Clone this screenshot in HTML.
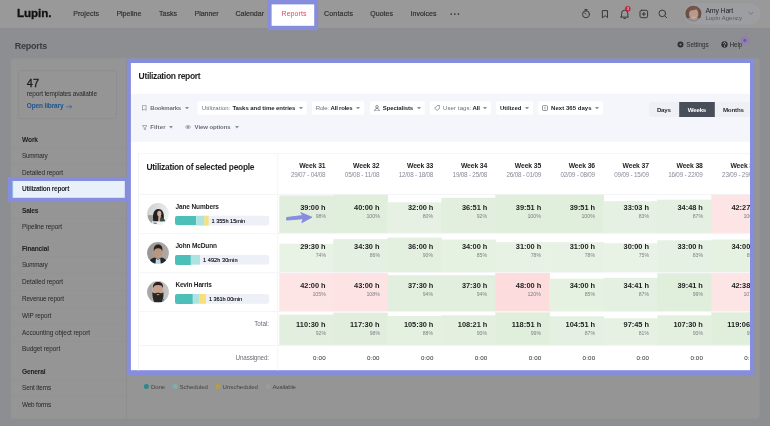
<!DOCTYPE html>
<html><head><meta charset="utf-8"><title>Utilization report</title>
<style>
html,body{margin:0;padding:0}
body{width:770px;height:426px;overflow:hidden;background:#8d8e92;font-family:"Liberation Sans",sans-serif;position:relative}
#r{position:absolute;left:0;top:0;width:770px;height:426px;overflow:hidden;will-change:transform}
#r div,#r svg,#r span{position:absolute}
#r span{white-space:nowrap;line-height:1;display:block}
</style></head>
<body><div id="r">
<svg style="left:0;top:0" width="770" height="426" viewBox="0 0 770 426"><rect x="0.00" y="0.00" width="770.00" height="28.20" fill="#999999"/><rect x="0.00" y="28.20" width="770.00" height="1.00" fill="rgb(0,0,0)" fill-opacity=".035"/><rect x="10.80" y="58.30" width="748.70" height="360.30" rx="2.00" fill="#959596"/><rect x="126.00" y="58.30" width="0.80" height="360.00" fill="#8c8c8e"/></svg>
<span style="font-size:11.6px;font-weight:700;color:#101010;top:7px;left:16.9px;letter-spacing:-0.056px;-webkit-text-stroke:.3px #101010;">Lupin.</span>
<span style="font-size:7px;font-weight:400;color:#2c2c2c;top:10px;left:73.2px;letter-spacing:0.072px;-webkit-text-stroke:.15px #2c2c2c;">Projects</span>
<span style="font-size:7px;font-weight:400;color:#2c2c2c;top:10px;left:116.4px;letter-spacing:-0.003px;-webkit-text-stroke:.15px #2c2c2c;">Pipeline</span>
<span style="font-size:7px;font-weight:400;color:#2c2c2c;top:10px;left:159px;letter-spacing:-0.002px;-webkit-text-stroke:.15px #2c2c2c;">Tasks</span>
<span style="font-size:7px;font-weight:400;color:#2c2c2c;top:10px;left:194.5px;letter-spacing:-0.023px;-webkit-text-stroke:.15px #2c2c2c;">Planner</span>
<span style="font-size:7px;font-weight:400;color:#2c2c2c;top:10px;left:235.5px;letter-spacing:0.011px;-webkit-text-stroke:.15px #2c2c2c;">Calendar</span>
<span style="font-size:7px;font-weight:400;color:#2c2c2c;top:10px;left:324px;letter-spacing:0.196px;-webkit-text-stroke:.15px #2c2c2c;">Contacts</span>
<span style="font-size:7px;font-weight:400;color:#2c2c2c;top:10px;left:370.2px;letter-spacing:0.064px;-webkit-text-stroke:.15px #2c2c2c;">Quotes</span>
<span style="font-size:7px;font-weight:400;color:#2c2c2c;top:10px;left:410.5px;letter-spacing:0.030px;-webkit-text-stroke:.15px #2c2c2c;">Invoices</span>
<svg style="left:0;top:0" width="770" height="426" viewBox="0 0 770 426"><rect x="450.40" y="13.20" width="1.70" height="1.70" rx="0.85" fill="#333"/><rect x="454.00" y="13.20" width="1.70" height="1.70" rx="0.85" fill="#333"/><rect x="457.60" y="13.20" width="1.70" height="1.70" rx="0.85" fill="#333"/><rect x="267.30" y="0.00" width="50.80" height="30.10" fill="#868ddd"/><rect x="271.60" y="4.40" width="42.60" height="21.40" fill="#ffffff"/></svg>
<span style="font-size:7px;font-weight:400;color:#e8425f;top:10px;left:281.5px;letter-spacing:0.081px;">Reports</span>
<svg style="left:575px;top:0px" width="100" height="28" viewBox="575 0 100 28" fill="none" stroke="#343434" stroke-width=".95" stroke-linecap="round" stroke-linejoin="round"><circle cx="586" cy="14.300" r="3.500"/><path d="M584.800 9.700h2.400M586 9.700v1.100M586 14.300l-1.500-1.500"/><path d="M602.700 10.600h4.800v7l-2.400-1.900-2.400 1.900z"/><path d="M621.600 16.300v-3a3.100 3.100 0 0 1 6.200 0v3l.700.800h-7.600zM623.800 18.400h1.800"/><rect x="640" y="10.300" width="7.600" height="7.400" rx="1.500"/><path d="M643.800 12.400v3.200M642.200 14h3.200"/><circle cx="662.300" cy="13.400" r="3.300"/><path d="M664.800 15.900l1.900 1.900"/></svg>
<svg style="left:0;top:0" width="770" height="426" viewBox="0 0 770 426"><rect x="625.00" y="5.90" width="5.60" height="5.60" rx="2.80" fill="#bb2a40"/></svg>
<span style="font-size:4px;font-weight:700;color:#e6c9cd;top:7px;left:626.7px;">3</span>
<svg style="left:0;top:0" width="770" height="426" viewBox="0 0 770 426"><rect x="684.00" y="3.30" width="76.40" height="21.20" rx="11.00" fill="#9d9ea2"/></svg>
<svg style="left:685px;top:5px" width="17" height="17" viewBox="0 0 17 17"><defs><clipPath id="cu"><circle cx="8.400" cy="8.700" r="8"/></clipPath><filter id="bu" x="-10%" y="-10%" width="120%" height="120%"><feGaussianBlur stdDeviation=".5"/></filter></defs><g clip-path="url(#cu)"><g filter="url(#bu)"><rect width="17" height="17" fill="#6b4f43"/><path d="M0 17c.5-3 3-4 5.500-4.500h6c2.500.500 5 1.500 5.500 4.500z" fill="#8a8a88"/><ellipse cx="8.700" cy="9" rx="4.700" ry="6" fill="#b89a8c"/><path d="M3.500 9C2.500 3.500 5.500.8 8.700.8c3.400 0 6.300 2.700 5.200 8.200-.5-3-1.800-4.600-2.700-5-1.500 1.200-4 1.600-5.700 1.400C4.500 6.200 3.900 7.400 3.500 9z" fill="#73564a"/><path d="M6.800 11.500c1.200.700 2.600.700 3.800 0-.5 1.300-3.300 1.300-3.800 0z" fill="#e6d6cf"/></g></g></svg>
<span style="font-size:7px;font-weight:400;color:#262626;top:7px;left:705.4px;letter-spacing:-0.196px;">Amy Hart</span>
<span style="font-size:6px;font-weight:400;color:#59595b;top:15px;left:705.4px;letter-spacing:0.043px;">Lupin Agency</span>
<svg style="left:748px;top:11.4px" width="6" height="5" viewBox="0 0 6 5" fill="none" stroke="#777" stroke-width=".9"><path d="M.8 1l2.2 2.4L5.2 1"/></svg>
<span style="font-size:9px;font-weight:700;color:#3a3a3c;top:42px;left:14.8px;letter-spacing:-0.253px;">Reports</span>
<svg style="left:676.8px;top:41px" width="7" height="7" viewBox="0 0 8 8"><circle cx="4" cy="4" r="3.4" fill="#2e2e2e"/><circle cx="4" cy="4" r="1.2" fill="#8d8e92"/></svg>
<span style="font-size:6.4px;font-weight:400;color:#2c2c2c;top:42px;left:686.3px;letter-spacing:-0.113px;">Settings</span>
<svg style="left:720.6px;top:41px" width="7" height="7" viewBox="0 0 8 8"><circle cx="4" cy="4" r="3.6" fill="#2e2e2e"/></svg>
<svg style="left:720.6px;top:41px" width="7" height="7" viewBox="0 0 8 8" fill="none" stroke="#c4c4c6" stroke-width=".85" stroke-linecap="round"><path d="M2.700 3a1.300 1.200 0 1 1 2 1c-.450.300-.700.500-.700.900"/><path d="M4 6.100v.050"/></svg>
<span style="font-size:6.4px;font-weight:400;color:#2c2c2c;top:42px;left:729.6px;letter-spacing:-0.185px;">Help</span>
<svg style="left:0;top:0" width="770" height="426" viewBox="0 0 770 426"><rect x="740.20" y="35.70" width="9.40" height="9.40" rx="4.70" fill="rgb(150,110,210)" fill-opacity=".35"/><rect x="743.30" y="38.80" width="3.20" height="3.20" rx="1.60" fill="#7a4fc0"/></svg>
<div style="left:18.4px;top:69.7px;width:98.4px;height:49.3px;background:transparent;border:0.8px solid rgba(0,0,0,.045);border-radius:2px;box-sizing:border-box;"></div>
<span style="font-size:11px;font-weight:400;color:#1c1c1c;top:78px;left:26.8px;letter-spacing:0.150px;-webkit-text-stroke:.3px #1c1c1c;">47</span>
<span style="font-size:6.5px;font-weight:400;color:#2a2a2a;top:91px;left:26.8px;letter-spacing:-0.169px;">report templates available</span>
<span style="font-size:6.5px;font-weight:700;color:#1f548e;top:103px;left:26.8px;letter-spacing:-0.136px;">Open library</span>
<svg style="left:66px;top:103.6px" width="6.400" height="5.500" viewBox="0 0 7 6" fill="none" stroke="#2f639b" stroke-width=".75" stroke-linecap="round" stroke-linejoin="round"><path d="M.6 3h5.600M4.400 1.200l1.800 1.800-1.800 1.800"/></svg>
<span style="font-size:6.6px;font-weight:700;color:#1c1c1c;top:137px;left:22px;letter-spacing:-0.125px;">Work</span>
<span style="font-size:6.4px;font-weight:400;color:#282828;top:153px;left:22px;letter-spacing:-0.291px;">Summary</span>
<svg style="left:0;top:0" width="770" height="426" viewBox="0 0 770 426"><rect x="11.00" y="147.20" width="115.00" height="0.70" fill="rgb(0,0,0)" fill-opacity=".022"/></svg>
<span style="font-size:6.4px;font-weight:400;color:#282828;top:170px;left:22px;letter-spacing:-0.066px;">Detailed report</span>
<svg style="left:0;top:0" width="770" height="426" viewBox="0 0 770 426"><rect x="11.00" y="164.00" width="115.00" height="0.70" fill="rgb(0,0,0)" fill-opacity=".022"/></svg>
<span style="font-size:6.6px;font-weight:700;color:#1c1c1c;top:208px;left:22px;letter-spacing:-0.234px;">Sales</span>
<span style="font-size:6.4px;font-weight:400;color:#282828;top:224px;left:22px;letter-spacing:-0.087px;">Pipeline report</span>
<svg style="left:0;top:0" width="770" height="426" viewBox="0 0 770 426"><rect x="11.00" y="218.10" width="115.00" height="0.70" fill="rgb(0,0,0)" fill-opacity=".022"/></svg>
<span style="font-size:6.6px;font-weight:700;color:#1c1c1c;top:246px;left:22px;letter-spacing:-0.199px;">Financial</span>
<span style="font-size:6.4px;font-weight:400;color:#282828;top:262px;left:22px;letter-spacing:-0.291px;">Summary</span>
<svg style="left:0;top:0" width="770" height="426" viewBox="0 0 770 426"><rect x="11.00" y="256.40" width="115.00" height="0.70" fill="rgb(0,0,0)" fill-opacity=".022"/></svg>
<span style="font-size:6.4px;font-weight:400;color:#282828;top:279px;left:22px;letter-spacing:-0.066px;">Detailed report</span>
<svg style="left:0;top:0" width="770" height="426" viewBox="0 0 770 426"><rect x="11.00" y="273.20" width="115.00" height="0.70" fill="rgb(0,0,0)" fill-opacity=".022"/></svg>
<span style="font-size:6.4px;font-weight:400;color:#282828;top:296px;left:22px;letter-spacing:-0.159px;">Revenue report</span>
<svg style="left:0;top:0" width="770" height="426" viewBox="0 0 770 426"><rect x="11.00" y="290.20" width="115.00" height="0.70" fill="rgb(0,0,0)" fill-opacity=".022"/></svg>
<span style="font-size:6.4px;font-weight:400;color:#282828;top:313px;left:22px;letter-spacing:-0.126px;">WIP report</span>
<svg style="left:0;top:0" width="770" height="426" viewBox="0 0 770 426"><rect x="11.00" y="307.00" width="115.00" height="0.70" fill="rgb(0,0,0)" fill-opacity=".022"/></svg>
<span style="font-size:6.4px;font-weight:400;color:#282828;top:330px;left:22px;letter-spacing:-0.040px;">Accounting object report</span>
<svg style="left:0;top:0" width="770" height="426" viewBox="0 0 770 426"><rect x="11.00" y="323.90" width="115.00" height="0.70" fill="rgb(0,0,0)" fill-opacity=".022"/></svg>
<span style="font-size:6.4px;font-weight:400;color:#282828;top:346px;left:22px;letter-spacing:-0.045px;">Budget report</span>
<svg style="left:0;top:0" width="770" height="426" viewBox="0 0 770 426"><rect x="11.00" y="340.70" width="115.00" height="0.70" fill="rgb(0,0,0)" fill-opacity=".022"/></svg>
<span style="font-size:6.6px;font-weight:700;color:#1c1c1c;top:369px;left:22px;letter-spacing:-0.160px;">General</span>
<span style="font-size:6.4px;font-weight:400;color:#282828;top:385px;left:22px;letter-spacing:-0.111px;">Sent items</span>
<svg style="left:0;top:0" width="770" height="426" viewBox="0 0 770 426"><rect x="11.00" y="379.20" width="115.00" height="0.70" fill="rgb(0,0,0)" fill-opacity=".022"/></svg>
<span style="font-size:6.4px;font-weight:400;color:#282828;top:402px;left:22px;letter-spacing:-0.198px;">Web forms</span>
<svg style="left:0;top:0" width="770" height="426" viewBox="0 0 770 426"><rect x="11.00" y="395.80" width="115.00" height="0.70" fill="rgb(0,0,0)" fill-opacity=".022"/><rect x="7.80" y="177.00" width="120.40" height="24.60" fill="#868ddd"/><rect x="12.20" y="181.00" width="112.60" height="16.80" fill="#e8f1fa"/><rect x="12.20" y="181.00" width="0.90" height="16.80" fill="#7db4e8"/></svg>
<span style="font-size:6.5px;font-weight:700;color:#26282c;top:186px;left:22px;letter-spacing:-0.255px;">Utilization report</span>
<svg style="left:0;top:0" width="770" height="426" viewBox="0 0 770 426"><rect x="143.90" y="384.10" width="5.00" height="5.00" rx="2.50" fill="#2c8a86"/></svg>
<span style="font-size:6.1px;font-weight:400;color:#454545;top:384px;left:151px;letter-spacing:-0.193px;">Done</span>
<svg style="left:0;top:0" width="770" height="426" viewBox="0 0 770 426"><rect x="172.50" y="384.10" width="5.00" height="5.00" rx="2.50" fill="#7bb0ae"/></svg>
<span style="font-size:6.1px;font-weight:400;color:#454545;top:384px;left:179.5px;letter-spacing:-0.039px;">Scheduled</span>
<svg style="left:0;top:0" width="770" height="426" viewBox="0 0 770 426"><rect x="215.40" y="384.10" width="5.00" height="5.00" rx="2.50" fill="#b79d45"/></svg>
<span style="font-size:6.1px;font-weight:400;color:#454545;top:384px;left:222.6px;letter-spacing:-0.018px;">Unscheduled</span>
<svg style="left:0;top:0" width="770" height="426" viewBox="0 0 770 426"><rect x="265.50" y="384.10" width="5.00" height="5.00" rx="2.50" fill="#9a9aa0"/></svg>
<span style="font-size:6.1px;font-weight:400;color:#454545;top:384px;left:272.5px;letter-spacing:-0.141px;">Available</span>
<svg style="left:0;top:0" width="770" height="426" viewBox="0 0 770 426"><rect x="126.80" y="58.60" width="627.50" height="316.90" fill="#868ddd"/><rect x="130.90" y="63.00" width="619.10" height="307.20" fill="#ffffff"/><rect x="131.10" y="93.90" width="618.90" height="47.80" fill="#f5f6fb"/></svg>
<span style="font-size:8.5px;font-weight:700;color:#1e1e1e;top:72px;left:138.6px;letter-spacing:-0.325px;">Utilization report</span>
<svg style="left:142px;top:105.00px" width="5" height="6.600" viewBox="0 0 5 6.6" fill="none" stroke="#7d8391" stroke-width=".65" stroke-linejoin="round"><path d="M.5.400h3.600v5L2.300 4.100.5 5.400z"/></svg>
<span style="font-size:6px;font-weight:700;color:#6a6f7c;top:105px;left:150.3px;letter-spacing:-0.236px;">Bookmarks</span>
<svg style="left:185.2px;top:106.7px" width="4" height="2.6" viewBox="0 0 4 2.6"><path d="M0 0h4L2 2.6z" fill="#8d919c"/></svg>
<svg style="left:0;top:0" width="770" height="426" viewBox="0 0 770 426"><rect x="197.60" y="101.30" width="108.90" height="13.40" rx="2.00" fill="#ffffff"/></svg>
<span style="font-size:6px;font-weight:400;color:#6a6f7c;top:105px;left:201.8px;letter-spacing:0.083px;">Utilization:</span>
<span style="font-size:6px;font-weight:700;color:#1d1f24;top:105px;left:232.4px;letter-spacing:-0.060px;">Tasks and time entries</span>
<svg style="left:298.6px;top:106.7px" width="4" height="2.6" viewBox="0 0 4 2.6"><path d="M0 0h4L2 2.6z" fill="#8d919c"/></svg>
<svg style="left:0;top:0" width="770" height="426" viewBox="0 0 770 426"><rect x="312.00" y="101.30" width="52.30" height="13.40" rx="2.00" fill="#ffffff"/></svg>
<span style="font-size:6px;font-weight:400;color:#6a6f7c;top:105px;left:315.8px;letter-spacing:-0.204px;">Role:</span>
<span style="font-size:6px;font-weight:700;color:#1d1f24;top:105px;left:330.6px;letter-spacing:-0.211px;">All roles</span>
<svg style="left:356.4px;top:106.7px" width="4" height="2.6" viewBox="0 0 4 2.6"><path d="M0 0h4L2 2.6z" fill="#8d919c"/></svg>
<svg style="left:0;top:0" width="770" height="426" viewBox="0 0 770 426"><rect x="369.80" y="101.30" width="54.90" height="13.40" rx="2.00" fill="#ffffff"/></svg>
<svg style="left:374px;top:104.7px" width="6" height="6.4" viewBox="0 0 6 6.4" fill="none" stroke="#4a4e58" stroke-width=".6"><circle cx="3" cy="1.8" r="1.3"/><path d="M.6 6c0-1.6 1-2.5 2.4-2.5S5.400 4.400 5.400 6z" stroke-linejoin="round"/></svg>
<span style="font-size:6px;font-weight:700;color:#1d1f24;top:105px;left:382.8px;letter-spacing:-0.096px;">Specialists</span>
<svg style="left:416.6px;top:106.7px" width="4" height="2.6" viewBox="0 0 4 2.6"><path d="M0 0h4L2 2.6z" fill="#8d919c"/></svg>
<svg style="left:0;top:0" width="770" height="426" viewBox="0 0 770 426"><rect x="429.80" y="101.30" width="61.20" height="13.40" rx="2.00" fill="#ffffff"/></svg>
<svg style="left:433.6px;top:104.9px" width="6.400" height="6" viewBox="0 0 6.4 6" fill="none" stroke="#6a6f7c" stroke-width=".7" stroke-linejoin="round"><path d="M.6 3.200L3.200.600h2.600v2.600L3.200 5.400z"/></svg>
<span style="font-size:6px;font-weight:400;color:#6a6f7c;top:105px;left:443px;letter-spacing:0.106px;">User tags:</span>
<span style="font-size:6px;font-weight:700;color:#1d1f24;top:105px;left:472.6px;letter-spacing:-0.186px;">All</span>
<svg style="left:483px;top:106.7px" width="4" height="2.6" viewBox="0 0 4 2.6"><path d="M0 0h4L2 2.6z" fill="#8d919c"/></svg>
<svg style="left:0;top:0" width="770" height="426" viewBox="0 0 770 426"><rect x="496.20" y="101.30" width="36.80" height="13.40" rx="2.00" fill="#ffffff"/></svg>
<span style="font-size:6px;font-weight:700;color:#1d1f24;top:105px;left:500px;letter-spacing:0.008px;">Utilized</span>
<svg style="left:525px;top:106.7px" width="4" height="2.6" viewBox="0 0 4 2.6"><path d="M0 0h4L2 2.6z" fill="#8d919c"/></svg>
<svg style="left:0;top:0" width="770" height="426" viewBox="0 0 770 426"><rect x="537.70" y="101.30" width="65.20" height="13.40" rx="2.00" fill="#ffffff"/></svg>
<svg style="left:541.6px;top:104.9px" width="6" height="6" viewBox="0 0 6 6" fill="none" stroke="#555a67" stroke-width=".65"><rect x=".5" y=".7" width="5" height="4.800" rx=".8"/><path d="M3 2.200v2.200"/></svg>
<span style="font-size:6px;font-weight:700;color:#1d1f24;top:105px;left:551px;letter-spacing:0.047px;">Next 365 days</span>
<svg style="left:595px;top:106.7px" width="4" height="2.6" viewBox="0 0 4 2.6"><path d="M0 0h4L2 2.6z" fill="#8d919c"/></svg>
<svg style="left:141.6px;top:124.50px" width="5.600" height="5.600" viewBox="0 0 6 6" fill="none" stroke="#7d8391" stroke-width=".7" stroke-linejoin="round"><path d="M.5.600h5L3.600 3v2.400L2.400 4.600V3z"/></svg>
<span style="font-size:6px;font-weight:700;color:#6a6f7c;top:124px;left:150.3px;letter-spacing:0.106px;">Filter</span>
<svg style="left:168.6px;top:126.0px" width="4" height="2.6" viewBox="0 0 4 2.6"><path d="M0 0h4L2 2.6z" fill="#8d919c"/></svg>
<svg style="left:185.400px;top:125.30px" width="6" height="4" viewBox="0 0 6.6 4.4" fill="none" stroke="#7d8391" stroke-width=".7"><path d="M.4 2.200C1.400.800 2.300.400 3.300.400s1.900.4 2.900 1.800C5.200 3.600 4.300 4 3.300 4S1.400 3.600.4 2.200z"/><circle cx="3.300" cy="2.200" r=".8" fill="#6a6f7c"/></svg>
<span style="font-size:6px;font-weight:700;color:#6a6f7c;top:124px;left:194.6px;letter-spacing:-0.082px;">View options</span>
<svg style="left:235px;top:126.0px" width="4" height="2.6" viewBox="0 0 4 2.6"><path d="M0 0h4L2 2.6z" fill="#8d919c"/></svg>
<div style="left:648.7px;top:102px;width:101px;height:15px;background:#eff0f5;border-radius:2px 0 0 2px;"></div>
<svg style="left:0;top:0" width="770" height="426" viewBox="0 0 770 426"><rect x="679.20" y="102.00" width="35.60" height="15.00" fill="#484d5a"/></svg>
<span style="font-size:6.2px;font-weight:700;color:#2a2d35;top:107px;left:656.9px;letter-spacing:-0.266px;">Days</span>
<span style="font-size:6.2px;font-weight:700;color:#ffffff;top:107px;left:687.8px;letter-spacing:-0.250px;">Weeks</span>
<span style="font-size:6.2px;font-weight:700;color:#2a2d35;top:107px;left:722.9px;letter-spacing:-0.180px;">Months</span>
<svg style="left:0;top:0" width="770" height="426" viewBox="0 0 770 426"><rect x="138.10" y="153.30" width="611.90" height="0.80" fill="#f1f2f6"/><rect x="138.10" y="153.30" width="0.80" height="217.10" fill="#f1f2f6"/><rect x="277.40" y="153.30" width="0.80" height="217.10" fill="#f1f2f6"/><rect x="138.10" y="194.20" width="611.90" height="0.80" fill="#f1f2f6"/><rect x="138.10" y="233.30" width="611.90" height="0.80" fill="#f1f2f6"/><rect x="138.10" y="272.40" width="611.90" height="0.80" fill="#f1f2f6"/><rect x="138.10" y="311.30" width="611.90" height="0.80" fill="#f1f2f6"/><rect x="138.10" y="345.00" width="611.90" height="0.80" fill="#f1f2f6"/></svg>
<span style="font-size:8.4px;font-weight:700;color:#1e1e1e;top:163px;left:146.5px;letter-spacing:-0.255px;">Utilization of selected people</span>
<svg style="left:131px;top:63px" width="619" height="307" viewBox="131 63 619 307"><defs><linearGradient id="rg" x1="0" y1="0" x2="0" y2="1"><stop offset="0" stop-color="#fcdcdd"/><stop offset="1" stop-color="#fde9e9"/></linearGradient></defs><rect x="279.30" y="195.46" width="54.60" height="37.44" fill="#e1eedd"/><rect x="333.30" y="194.70" width="54.60" height="38.20" fill="#e0eedc"/><rect x="387.30" y="202.34" width="54.60" height="30.56" fill="#e6f1e3"/><rect x="441.30" y="197.76" width="54.60" height="35.14" fill="#e2efdf"/><rect x="495.30" y="194.70" width="54.60" height="38.20" fill="#e0eedc"/><rect x="549.30" y="194.70" width="54.60" height="38.20" fill="#e0eedc"/><rect x="603.30" y="201.19" width="54.60" height="31.71" fill="#e5f1e2"/><rect x="657.30" y="199.67" width="54.60" height="33.23" fill="#e4f0e1"/><rect x="711.30" y="194.70" width="54.00" height="38.20" fill="#fde4e5"/><rect x="279.30" y="243.73" width="54.60" height="28.27" fill="#e8f2e5"/><rect x="333.30" y="239.15" width="54.60" height="32.85" fill="#e4f0e1"/><rect x="387.30" y="237.62" width="54.60" height="34.38" fill="#e3f0e0"/><rect x="441.30" y="239.53" width="54.60" height="32.47" fill="#e5f1e1"/><rect x="495.30" y="242.20" width="54.60" height="29.80" fill="#e7f2e4"/><rect x="549.30" y="242.20" width="54.60" height="29.80" fill="#e7f2e4"/><rect x="603.30" y="243.35" width="54.60" height="28.65" fill="#e8f2e5"/><rect x="657.30" y="240.29" width="54.60" height="31.71" fill="#e5f1e2"/><rect x="711.30" y="239.53" width="54.00" height="32.47" fill="#e5f1e1"/><rect x="279.30" y="272.90" width="54.60" height="38.20" fill="#fde5e6"/><rect x="333.30" y="272.90" width="54.60" height="38.20" fill="#fde3e4"/><rect x="387.30" y="275.19" width="54.60" height="35.91" fill="#e2efde"/><rect x="441.30" y="275.19" width="54.60" height="35.91" fill="#e2efde"/><rect x="495.30" y="272.90" width="54.60" height="38.20" fill="#fddcdd"/><rect x="549.30" y="278.63" width="54.60" height="32.47" fill="#e5f1e1"/><rect x="603.30" y="277.87" width="54.60" height="33.23" fill="#e4f0e1"/><rect x="657.30" y="273.28" width="54.60" height="37.82" fill="#e0eedc"/><rect x="711.30" y="272.90" width="54.00" height="38.20" fill="#fde4e5"/><rect x="279.30" y="314.63" width="54.60" height="30.27" fill="#e2efdf"/><rect x="333.30" y="312.66" width="54.60" height="32.24" fill="#e1eedd"/><rect x="387.30" y="315.95" width="54.60" height="28.95" fill="#e4f0e0"/><rect x="441.30" y="315.29" width="54.60" height="29.61" fill="#e3f0e0"/><rect x="495.30" y="312.33" width="54.60" height="32.57" fill="#e0eedc"/><rect x="549.30" y="316.28" width="54.60" height="28.62" fill="#e4f0e1"/><rect x="603.30" y="318.25" width="54.60" height="26.65" fill="#e6f1e3"/><rect x="657.30" y="315.29" width="54.60" height="29.61" fill="#e3f0e0"/><rect x="711.30" y="312.33" width="54.00" height="32.57" fill="#e0eedc"/></svg>
<div style="left:131px;top:63px;width:619px;height:307.4px;overflow:hidden;background:none;">
<span style="font-size:6.8px;font-weight:700;color:#1e1e1e;top:100px;left:194.48px;transform:translateX(-100%);letter-spacing:-0.116px;">Week 31</span>
<span style="font-size:6.3px;font-weight:400;color:#878c9b;top:109px;left:194.40px;transform:translateX(-100%);letter-spacing:-0.202px;">29/07 - 04/08</span>
<span style="font-size:6.8px;font-weight:700;color:#1e1e1e;top:100px;left:248.38px;transform:translateX(-100%);letter-spacing:-0.116px;">Week 32</span>
<span style="font-size:6.3px;font-weight:400;color:#878c9b;top:109px;left:248.34px;transform:translateX(-100%);letter-spacing:-0.163px;">05/08 - 11/08</span>
<span style="font-size:6.8px;font-weight:700;color:#1e1e1e;top:100px;left:302.28px;transform:translateX(-100%);letter-spacing:-0.116px;">Week 33</span>
<span style="font-size:6.3px;font-weight:400;color:#878c9b;top:109px;left:302.20px;transform:translateX(-100%);letter-spacing:-0.202px;">12/08 - 18/08</span>
<span style="font-size:6.8px;font-weight:700;color:#1e1e1e;top:100px;left:356.18px;transform:translateX(-100%);letter-spacing:-0.116px;">Week 34</span>
<span style="font-size:6.3px;font-weight:400;color:#878c9b;top:109px;left:356.10px;transform:translateX(-100%);letter-spacing:-0.202px;">19/08 - 25/08</span>
<span style="font-size:6.8px;font-weight:700;color:#1e1e1e;top:100px;left:410.08px;transform:translateX(-100%);letter-spacing:-0.116px;">Week 35</span>
<span style="font-size:6.3px;font-weight:400;color:#878c9b;top:109px;left:410.00px;transform:translateX(-100%);letter-spacing:-0.202px;">26/08 - 01/09</span>
<span style="font-size:6.8px;font-weight:700;color:#1e1e1e;top:100px;left:463.98px;transform:translateX(-100%);letter-spacing:-0.116px;">Week 36</span>
<span style="font-size:6.3px;font-weight:400;color:#878c9b;top:109px;left:463.90px;transform:translateX(-100%);letter-spacing:-0.202px;">02/09 - 08/09</span>
<span style="font-size:6.8px;font-weight:700;color:#1e1e1e;top:100px;left:517.88px;transform:translateX(-100%);letter-spacing:-0.116px;">Week 37</span>
<span style="font-size:6.3px;font-weight:400;color:#878c9b;top:109px;left:517.80px;transform:translateX(-100%);letter-spacing:-0.202px;">09/09 - 15/09</span>
<span style="font-size:6.8px;font-weight:700;color:#1e1e1e;top:100px;left:571.78px;transform:translateX(-100%);letter-spacing:-0.116px;">Week 38</span>
<span style="font-size:6.3px;font-weight:400;color:#878c9b;top:109px;left:571.70px;transform:translateX(-100%);letter-spacing:-0.202px;">16/09 - 22/09</span>
<span style="font-size:6.8px;font-weight:700;color:#1e1e1e;top:100px;left:625.68px;transform:translateX(-100%);letter-spacing:-0.116px;">Week 39</span>
<span style="font-size:6.3px;font-weight:400;color:#878c9b;top:109px;left:625.60px;transform:translateX(-100%);letter-spacing:-0.202px;">23/09 - 29/09</span>
<span style="font-size:7.4px;font-weight:700;color:#1e1e1e;top:141px;left:194.59px;transform:translateX(-100%);letter-spacing:-0.014px;">39:00 h</span>
<span style="font-size:6.2px;font-weight:400;color:#7d8087;top:150px;left:194.59999999999997px;transform-origin:100% 50%;transform:translateX(-100%) scaleX(0.8313);">98%</span>
<span style="font-size:7.4px;font-weight:700;color:#1e1e1e;top:141px;left:248.49px;transform:translateX(-100%);letter-spacing:-0.014px;">40:00 h</span>
<span style="font-size:6.2px;font-weight:400;color:#7d8087;top:150px;left:248.5px;transform-origin:100% 50%;transform:translateX(-100%) scaleX(0.8592);">100%</span>
<span style="font-size:7.4px;font-weight:700;color:#1e1e1e;top:141px;left:302.39px;transform:translateX(-100%);letter-spacing:-0.014px;">32:00 h</span>
<span style="font-size:6.2px;font-weight:400;color:#7d8087;top:150px;left:302.4px;transform-origin:100% 50%;transform:translateX(-100%) scaleX(0.8313);">80%</span>
<span style="font-size:7.4px;font-weight:700;color:#1e1e1e;top:141px;left:356.29px;transform:translateX(-100%);letter-spacing:-0.014px;">36:51 h</span>
<span style="font-size:6.2px;font-weight:400;color:#7d8087;top:150px;left:356.29999999999995px;transform-origin:100% 50%;transform:translateX(-100%) scaleX(0.8313);">92%</span>
<span style="font-size:7.4px;font-weight:700;color:#1e1e1e;top:141px;left:410.19px;transform:translateX(-100%);letter-spacing:-0.014px;">39:51 h</span>
<span style="font-size:6.2px;font-weight:400;color:#7d8087;top:150px;left:410.19999999999993px;transform-origin:100% 50%;transform:translateX(-100%) scaleX(0.8592);">100%</span>
<span style="font-size:7.4px;font-weight:700;color:#1e1e1e;top:141px;left:464.09px;transform:translateX(-100%);letter-spacing:-0.014px;">39:51 h</span>
<span style="font-size:6.2px;font-weight:400;color:#7d8087;top:150px;left:464.1px;transform-origin:100% 50%;transform:translateX(-100%) scaleX(0.8592);">100%</span>
<span style="font-size:7.4px;font-weight:700;color:#1e1e1e;top:141px;left:517.99px;transform:translateX(-100%);letter-spacing:-0.014px;">33:03 h</span>
<span style="font-size:6.2px;font-weight:400;color:#7d8087;top:150px;left:518.0px;transform-origin:100% 50%;transform:translateX(-100%) scaleX(0.8313);">83%</span>
<span style="font-size:7.4px;font-weight:700;color:#1e1e1e;top:141px;left:571.89px;transform:translateX(-100%);letter-spacing:-0.014px;">34:48 h</span>
<span style="font-size:6.2px;font-weight:400;color:#7d8087;top:150px;left:571.9px;transform-origin:100% 50%;transform:translateX(-100%) scaleX(0.8313);">87%</span>
<span style="font-size:7.4px;font-weight:700;color:#1e1e1e;top:141px;left:625.79px;transform:translateX(-100%);letter-spacing:-0.014px;">42:27 h</span>
<span style="font-size:6.2px;font-weight:400;color:#7d8087;top:150px;left:625.8px;transform-origin:100% 50%;transform:translateX(-100%) scaleX(0.8592);">106%</span>
<span style="font-size:7.4px;font-weight:700;color:#1e1e1e;top:180px;left:194.59px;transform:translateX(-100%);letter-spacing:-0.014px;">29:30 h</span>
<span style="font-size:6.2px;font-weight:400;color:#7d8087;top:189px;left:194.59999999999997px;transform-origin:100% 50%;transform:translateX(-100%) scaleX(0.8313);">74%</span>
<span style="font-size:7.4px;font-weight:700;color:#1e1e1e;top:180px;left:248.49px;transform:translateX(-100%);letter-spacing:-0.014px;">34:30 h</span>
<span style="font-size:6.2px;font-weight:400;color:#7d8087;top:189px;left:248.5px;transform-origin:100% 50%;transform:translateX(-100%) scaleX(0.8313);">86%</span>
<span style="font-size:7.4px;font-weight:700;color:#1e1e1e;top:180px;left:302.39px;transform:translateX(-100%);letter-spacing:-0.014px;">36:00 h</span>
<span style="font-size:6.2px;font-weight:400;color:#7d8087;top:189px;left:302.4px;transform-origin:100% 50%;transform:translateX(-100%) scaleX(0.8313);">90%</span>
<span style="font-size:7.4px;font-weight:700;color:#1e1e1e;top:180px;left:356.29px;transform:translateX(-100%);letter-spacing:-0.014px;">34:00 h</span>
<span style="font-size:6.2px;font-weight:400;color:#7d8087;top:189px;left:356.29999999999995px;transform-origin:100% 50%;transform:translateX(-100%) scaleX(0.8313);">85%</span>
<span style="font-size:7.4px;font-weight:700;color:#1e1e1e;top:180px;left:410.19px;transform:translateX(-100%);letter-spacing:-0.014px;">31:00 h</span>
<span style="font-size:6.2px;font-weight:400;color:#7d8087;top:189px;left:410.19999999999993px;transform-origin:100% 50%;transform:translateX(-100%) scaleX(0.8313);">78%</span>
<span style="font-size:7.4px;font-weight:700;color:#1e1e1e;top:180px;left:464.09px;transform:translateX(-100%);letter-spacing:-0.014px;">31:00 h</span>
<span style="font-size:6.2px;font-weight:400;color:#7d8087;top:189px;left:464.1px;transform-origin:100% 50%;transform:translateX(-100%) scaleX(0.8313);">78%</span>
<span style="font-size:7.4px;font-weight:700;color:#1e1e1e;top:180px;left:517.99px;transform:translateX(-100%);letter-spacing:-0.014px;">30:00 h</span>
<span style="font-size:6.2px;font-weight:400;color:#7d8087;top:189px;left:518.0px;transform-origin:100% 50%;transform:translateX(-100%) scaleX(0.8313);">75%</span>
<span style="font-size:7.4px;font-weight:700;color:#1e1e1e;top:180px;left:571.89px;transform:translateX(-100%);letter-spacing:-0.014px;">33:00 h</span>
<span style="font-size:6.2px;font-weight:400;color:#7d8087;top:189px;left:571.9px;transform-origin:100% 50%;transform:translateX(-100%) scaleX(0.8313);">83%</span>
<span style="font-size:7.4px;font-weight:700;color:#1e1e1e;top:180px;left:625.79px;transform:translateX(-100%);letter-spacing:-0.014px;">34:00 h</span>
<span style="font-size:6.2px;font-weight:400;color:#7d8087;top:189px;left:625.8px;transform-origin:100% 50%;transform:translateX(-100%) scaleX(0.8313);">85%</span>
<span style="font-size:7.4px;font-weight:700;color:#1e1e1e;top:219px;left:194.59px;transform:translateX(-100%);letter-spacing:-0.014px;">42:00 h</span>
<span style="font-size:6.2px;font-weight:400;color:#7d8087;top:228px;left:194.59999999999997px;transform-origin:100% 50%;transform:translateX(-100%) scaleX(0.8592);">105%</span>
<span style="font-size:7.4px;font-weight:700;color:#1e1e1e;top:219px;left:248.49px;transform:translateX(-100%);letter-spacing:-0.014px;">43:00 h</span>
<span style="font-size:6.2px;font-weight:400;color:#7d8087;top:228px;left:248.5px;transform-origin:100% 50%;transform:translateX(-100%) scaleX(0.8592);">108%</span>
<span style="font-size:7.4px;font-weight:700;color:#1e1e1e;top:219px;left:302.39px;transform:translateX(-100%);letter-spacing:-0.014px;">37:30 h</span>
<span style="font-size:6.2px;font-weight:400;color:#7d8087;top:228px;left:302.4px;transform-origin:100% 50%;transform:translateX(-100%) scaleX(0.8313);">94%</span>
<span style="font-size:7.4px;font-weight:700;color:#1e1e1e;top:219px;left:356.29px;transform:translateX(-100%);letter-spacing:-0.014px;">37:30 h</span>
<span style="font-size:6.2px;font-weight:400;color:#7d8087;top:228px;left:356.29999999999995px;transform-origin:100% 50%;transform:translateX(-100%) scaleX(0.8313);">94%</span>
<span style="font-size:7.4px;font-weight:700;color:#1e1e1e;top:219px;left:410.19px;transform:translateX(-100%);letter-spacing:-0.014px;">48:00 h</span>
<span style="font-size:6.2px;font-weight:400;color:#7d8087;top:228px;left:410.19999999999993px;transform-origin:100% 50%;transform:translateX(-100%) scaleX(0.8592);">120%</span>
<span style="font-size:7.4px;font-weight:700;color:#1e1e1e;top:219px;left:464.09px;transform:translateX(-100%);letter-spacing:-0.014px;">34:00 h</span>
<span style="font-size:6.2px;font-weight:400;color:#7d8087;top:228px;left:464.1px;transform-origin:100% 50%;transform:translateX(-100%) scaleX(0.8313);">85%</span>
<span style="font-size:7.4px;font-weight:700;color:#1e1e1e;top:219px;left:517.99px;transform:translateX(-100%);letter-spacing:-0.014px;">34:41 h</span>
<span style="font-size:6.2px;font-weight:400;color:#7d8087;top:228px;left:518.0px;transform-origin:100% 50%;transform:translateX(-100%) scaleX(0.8313);">87%</span>
<span style="font-size:7.4px;font-weight:700;color:#1e1e1e;top:219px;left:571.89px;transform:translateX(-100%);letter-spacing:-0.014px;">39:41 h</span>
<span style="font-size:6.2px;font-weight:400;color:#7d8087;top:228px;left:571.9px;transform-origin:100% 50%;transform:translateX(-100%) scaleX(0.8313);">99%</span>
<span style="font-size:7.4px;font-weight:700;color:#1e1e1e;top:219px;left:625.79px;transform:translateX(-100%);letter-spacing:-0.014px;">42:38 h</span>
<span style="font-size:6.2px;font-weight:400;color:#7d8087;top:228px;left:625.8px;transform-origin:100% 50%;transform:translateX(-100%) scaleX(0.8592);">107%</span>
<span style="font-size:7.4px;font-weight:700;color:#1e1e1e;top:258px;left:194.64px;transform:translateX(-100%);letter-spacing:0.045px;">110:30 h</span>
<span style="font-size:6.2px;font-weight:400;color:#7d8087;top:267px;left:194.59999999999997px;transform-origin:100% 50%;transform:translateX(-100%) scaleX(0.8313);">92%</span>
<span style="font-size:7.4px;font-weight:700;color:#1e1e1e;top:258px;left:248.54px;transform:translateX(-100%);letter-spacing:0.045px;">117:30 h</span>
<span style="font-size:6.2px;font-weight:400;color:#7d8087;top:267px;left:248.5px;transform-origin:100% 50%;transform:translateX(-100%) scaleX(0.8313);">98%</span>
<span style="font-size:7.4px;font-weight:700;color:#1e1e1e;top:258px;left:302.39px;transform:translateX(-100%);letter-spacing:-0.013px;">105:30 h</span>
<span style="font-size:6.2px;font-weight:400;color:#7d8087;top:267px;left:302.4px;transform-origin:100% 50%;transform:translateX(-100%) scaleX(0.8313);">88%</span>
<span style="font-size:7.4px;font-weight:700;color:#1e1e1e;top:258px;left:356.29px;transform:translateX(-100%);letter-spacing:-0.013px;">108:21 h</span>
<span style="font-size:6.2px;font-weight:400;color:#7d8087;top:267px;left:356.29999999999995px;transform-origin:100% 50%;transform:translateX(-100%) scaleX(0.8313);">90%</span>
<span style="font-size:7.4px;font-weight:700;color:#1e1e1e;top:258px;left:410.24px;transform:translateX(-100%);letter-spacing:0.045px;">118:51 h</span>
<span style="font-size:6.2px;font-weight:400;color:#7d8087;top:267px;left:410.19999999999993px;transform-origin:100% 50%;transform:translateX(-100%) scaleX(0.8313);">99%</span>
<span style="font-size:7.4px;font-weight:700;color:#1e1e1e;top:258px;left:464.09px;transform:translateX(-100%);letter-spacing:-0.013px;">104:51 h</span>
<span style="font-size:6.2px;font-weight:400;color:#7d8087;top:267px;left:464.1px;transform-origin:100% 50%;transform:translateX(-100%) scaleX(0.8313);">87%</span>
<span style="font-size:7.4px;font-weight:700;color:#1e1e1e;top:258px;left:517.99px;transform:translateX(-100%);letter-spacing:-0.014px;">97:45 h</span>
<span style="font-size:6.2px;font-weight:400;color:#7d8087;top:267px;left:518.0px;transform-origin:100% 50%;transform:translateX(-100%) scaleX(0.8313);">81%</span>
<span style="font-size:7.4px;font-weight:700;color:#1e1e1e;top:258px;left:571.89px;transform:translateX(-100%);letter-spacing:-0.013px;">107:30 h</span>
<span style="font-size:6.2px;font-weight:400;color:#7d8087;top:267px;left:571.9px;transform-origin:100% 50%;transform:translateX(-100%) scaleX(0.8313);">90%</span>
<span style="font-size:7.4px;font-weight:700;color:#1e1e1e;top:258px;left:625.84px;transform:translateX(-100%);letter-spacing:0.045px;">119:06 h</span>
<span style="font-size:6.2px;font-weight:400;color:#7d8087;top:267px;left:625.8px;transform-origin:100% 50%;transform:translateX(-100%) scaleX(0.8313);">99%</span>
<span style="font-size:6.2px;font-weight:400;color:#2a2a2a;top:292px;left:194.75px;transform:translateX(-100%);letter-spacing:0.151px;">0:00</span>
<span style="font-size:6.2px;font-weight:400;color:#2a2a2a;top:292px;left:248.65px;transform:translateX(-100%);letter-spacing:0.151px;">0:00</span>
<span style="font-size:6.2px;font-weight:400;color:#2a2a2a;top:292px;left:302.55px;transform:translateX(-100%);letter-spacing:0.151px;">0:00</span>
<span style="font-size:6.2px;font-weight:400;color:#2a2a2a;top:292px;left:356.45px;transform:translateX(-100%);letter-spacing:0.151px;">0:00</span>
<span style="font-size:6.2px;font-weight:400;color:#2a2a2a;top:292px;left:410.35px;transform:translateX(-100%);letter-spacing:0.151px;">0:00</span>
<span style="font-size:6.2px;font-weight:400;color:#2a2a2a;top:292px;left:464.25px;transform:translateX(-100%);letter-spacing:0.151px;">0:00</span>
<span style="font-size:6.2px;font-weight:400;color:#2a2a2a;top:292px;left:518.15px;transform:translateX(-100%);letter-spacing:0.151px;">0:00</span>
<span style="font-size:6.2px;font-weight:400;color:#2a2a2a;top:292px;left:572.05px;transform:translateX(-100%);letter-spacing:0.151px;">0:00</span>
<span style="font-size:6.2px;font-weight:400;color:#2a2a2a;top:292px;left:625.95px;transform:translateX(-100%);letter-spacing:0.151px;">0:00</span>
</div>
<svg style="left:147px;top:203.20px" width="22" height="22" viewBox="0 0 22 22"><defs><linearGradient id="ag0" x1="0" y1="0" x2="1" y2=".3"><stop offset="0" stop-color="#cdcdcd"/><stop offset="1" stop-color="#eeeeee"/></linearGradient><clipPath id="c0"><circle cx="11" cy="11" r="10.900"/></clipPath><filter id="ab0" x="-10%" y="-10%" width="120%" height="120%"><feGaussianBlur stdDeviation=".45"/></filter></defs><g clip-path="url(#c0)"><g filter="url(#ab0)"><rect width="22" height="22" fill="url(#ag0)"/><path d="M.6 12.3l5.200-.4.800 7.600-4.400 1.200z" fill="#9e9e9e"/><path d="M6.200 17.500c-.9-6.200.6-11.400 5.200-11.400 4.400 0 5.900 4.600 5.300 9.300l-1.300 3.200H6.800z" fill="#1c2124"/><path d="M13.200 14.200c2.400.2 4.600 1.400 5.200 4.200l-5.400.6z" fill="#2c4e4b"/><ellipse cx="12.300" cy="10.600" rx="2.100" ry="2.900" fill="#d6b09a"/><path d="M11.400 13.200c.9-.7 2.600-.6 2.900.2l-1 1.600-.3 4h-1.900l.2-4.200z" fill="#cfa58f"/><path d="M4.500 18.600h14.500l-2.500 3.500H6.500z" fill="#f1f1f1"/><path d="M6.400 19.500l3.400.2-.2 1.300-3.200-.4z" fill="#5b6c86"/></g></g></svg>
<span style="font-size:6.5px;font-weight:700;color:#1e1e1e;top:204px;left:175.4px;letter-spacing:-0.109px;">Jane Numbers</span>
<svg style="left:0;top:0" width="770" height="426" viewBox="0 0 770 426"><rect x="175.40" y="215.80" width="93.70" height="9.70" rx="2.00" fill="#eef0f8"/></svg>
<div style="left:175.4px;top:215.79999999999998px;width:20.8px;height:9.7px;background:#4cbfb9;border-radius:2px 0 0 2px;"></div>
<svg style="left:0;top:0" width="770" height="426" viewBox="0 0 770 426"><rect x="196.20" y="215.80" width="8.20" height="9.70" fill="#ade4e2"/><rect x="204.40" y="215.80" width="4.20" height="9.70" fill="#fade78"/></svg>
<span style="font-size:5.6px;font-weight:400;color:#15171b;top:219px;left:211.6px;letter-spacing:-0.028px;text-shadow:0 0 .4px rgba(30,32,38,.7);">1 355h 15min</span>
<svg style="left:147px;top:242.05px" width="22" height="22" viewBox="0 0 22 22"><defs><linearGradient id="ag1" x1="0" y1="0" x2="1" y2="0"><stop offset="0" stop-color="#9a9592"/><stop offset="1" stop-color="#b0aba7"/></linearGradient><clipPath id="c1"><circle cx="11" cy="11" r="10.900"/></clipPath><filter id="ab1" x="-10%" y="-10%" width="120%" height="120%"><feGaussianBlur stdDeviation=".45"/></filter></defs><g clip-path="url(#c1)"><g filter="url(#ab1)"><rect width="22" height="22" fill="url(#ag1)"/><path d="M1.500 22c.4-4.200 3-5.600 6.200-6.400l3.400 1.600 3.400-1.600c3.200.8 5.400 2.200 5.800 6.400z" fill="#25262c"/><path d="M9 16.500l2.100 1.200 2.100-1.200.6 5.500H8.400z" fill="#c5d6e4"/><ellipse cx="11" cy="10.700" rx="3.600" ry="4.900" fill="#bd947b"/><path d="M6.900 9.400c-.7-4.700 1.300-6.900 4.200-6.900 3 0 5 2.200 4.100 6.900-.6-2.200-1.400-3.200-4.100-3.200-2.700 0-3.600 1-4.200 3.200z" fill="#27211f"/></g></g></svg>
<span style="font-size:6.5px;font-weight:700;color:#1e1e1e;top:243px;left:175.4px;letter-spacing:-0.137px;">John McDunn</span>
<svg style="left:0;top:0" width="770" height="426" viewBox="0 0 770 426"><rect x="175.40" y="254.90" width="93.70" height="9.70" rx="2.00" fill="#eef0f8"/></svg>
<div style="left:175.4px;top:254.9px;width:15.3px;height:9.7px;background:#4cbfb9;border-radius:2px 0 0 2px;"></div>
<svg style="left:0;top:0" width="770" height="426" viewBox="0 0 770 426"><rect x="190.70" y="254.90" width="9.30" height="9.70" fill="#ade4e2"/></svg>
<span style="font-size:5.6px;font-weight:400;color:#15171b;top:258px;left:203px;letter-spacing:0.054px;text-shadow:0 0 .4px rgba(30,32,38,.7);">1 492h 30min</span>
<svg style="left:147px;top:280.90px" width="22" height="22" viewBox="0 0 22 22"><defs><linearGradient id="ag2" x1="0" y1="0" x2="1" y2="0"><stop offset="0" stop-color="#b4b2b2"/><stop offset="1" stop-color="#c6c5c5"/></linearGradient><clipPath id="c2"><circle cx="11" cy="11" r="10.900"/></clipPath><filter id="ab2" x="-10%" y="-10%" width="120%" height="120%"><feGaussianBlur stdDeviation=".45"/></filter></defs><g clip-path="url(#c2)"><g filter="url(#ab2)"><rect width="22" height="22" fill="url(#ag2)"/><path d="M0 4h5.200l-.6 16H0z" fill="#a9a7a7"/><ellipse cx="10.900" cy="8.900" rx="5" ry="6" fill="#c8a28b"/><path d="M6 7.200C5.600 2.800 8 1.100 11 1.100c3.200 0 5.500 1.700 5 6.100-.5-2.100-1.700-3.300-5-3.300S6.600 5.100 6 7.200z" fill="#2a2321"/><path d="M5.400 10.800c.8 1.500 2.600 1.700 3.900 1.300 1.100-.4 2.400-.4 3.500 0 1.300.4 2.800.2 3.500-1.300.5 3.600-.1 7-1.200 10.200H7.100c-1.300-3.200-2-6.600-1.700-10.200z" fill="#292524"/><path d="M9.400 13.600c1-.5 2.200-.5 3.200 0-.7.800-2.500.8-3.200 0z" fill="#d9b7a4"/><circle cx="16.100" cy="18.700" r="1" fill="#3e7fc6"/></g></g></svg>
<span style="font-size:6.5px;font-weight:700;color:#1e1e1e;top:282px;left:175.4px;letter-spacing:-0.172px;">Kevin Harris</span>
<svg style="left:0;top:0" width="770" height="426" viewBox="0 0 770 426"><rect x="175.40" y="294.00" width="93.70" height="9.70" rx="2.00" fill="#eef0f8"/></svg>
<div style="left:175.4px;top:294.0px;width:17.2px;height:9.7px;background:#4cbfb9;border-radius:2px 0 0 2px;"></div>
<svg style="left:0;top:0" width="770" height="426" viewBox="0 0 770 426"><rect x="192.60" y="294.00" width="6.70" height="9.70" fill="#ade4e2"/><rect x="199.30" y="294.00" width="6.60" height="9.70" fill="#fade78"/></svg>
<span style="font-size:5.6px;font-weight:400;color:#15171b;top:297px;left:208.9px;letter-spacing:-0.064px;text-shadow:0 0 .4px rgba(30,32,38,.7);">1 361h 00min</span>
<span style="font-size:6.3px;font-weight:400;color:#6b6f79;top:321px;left:268.95px;transform:translateX(-100%);letter-spacing:-0.052px;">Total:</span>
<span style="font-size:6.3px;font-weight:400;color:#6b6f79;top:355px;left:268.84px;transform:translateX(-100%);letter-spacing:-0.162px;">Unassigned:</span>
<svg style="left:280px;top:205px" width="40" height="24" viewBox="280 205 40 24"><path d="M286.600 217.500 302.700 215.500 300.700 212.600 311.900 217.200 301.900 222.700 302.900 218.700 286.700 220.100z" fill="#868cde" stroke="#868cde" stroke-width=".9" stroke-linejoin="round"/></svg>
</div></body></html>
